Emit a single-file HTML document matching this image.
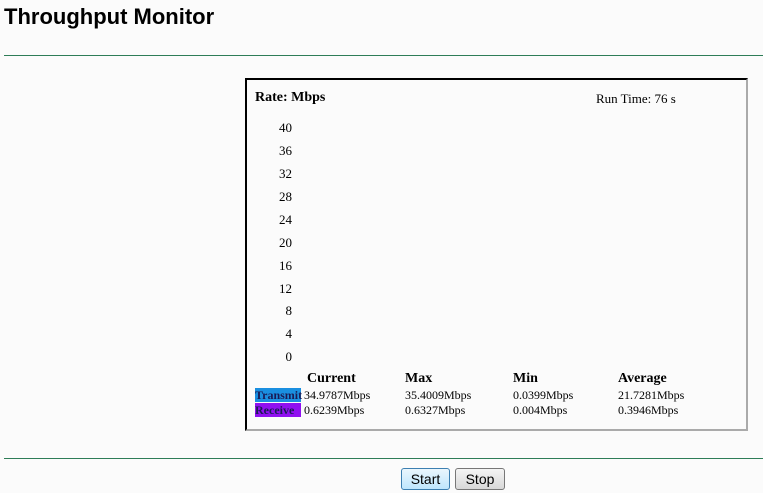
<!DOCTYPE html>
<html><head><style>
body{margin:0;width:763px;height:493px;background:#fbfbfb;position:relative;overflow:hidden;font-family:"Liberation Serif",serif;color:#000}
.a{position:absolute;white-space:nowrap}
h1{position:absolute;left:4px;top:4px;margin:0;font:bold 22px "Liberation Sans",sans-serif}
.hr{position:absolute;left:4px;width:759px;height:1px;background:#2e7d57}
.box{position:absolute;left:245px;top:78px;width:499px;height:349px;border-top:2px solid #000;border-left:2px solid #000;border-right:2px solid #aaa;border-bottom:2px solid #aaa;background:#fbfbfb}
.y{position:absolute;left:270px;width:22px;text-align:right;font-size:13px}
.s{font-size:12px}
.b{font-weight:bold;font-size:14px}
.btn{position:absolute;top:468px;height:22px;font:14px "Liberation Sans",sans-serif;border:1px solid #777;border-radius:3px;background:linear-gradient(#f4f4f4,#d8d8d8);text-align:center;line-height:21px;box-sizing:border-box}
</style></head><body>
<h1>Throughput Monitor</h1>
<div class="hr" style="top:55px"></div>
<div class="box"></div>
<div class="a" style="left:255px;top:90px;font-weight:bold;font-size:14px">Rate: Mbps</div>
<div class="a" style="left:596px;top:91px;font-size:13px">Run Time: 76 s</div>
<div class="y" style="top:120px">40</div>
<div class="y" style="top:143px">36</div>
<div class="y" style="top:166px">32</div>
<div class="y" style="top:189px">28</div>
<div class="y" style="top:212px">24</div>
<div class="y" style="top:235px">20</div>
<div class="y" style="top:258px">16</div>
<div class="y" style="top:281px">12</div>
<div class="y" style="top:303px">8</div>
<div class="y" style="top:326px">4</div>
<div class="y" style="top:349px">0</div>
<div class="a b" style="left:307px;top:371px">Current</div>
<div class="a b" style="left:405px;top:371px">Max</div>
<div class="a b" style="left:513px;top:371px">Min</div>
<div class="a b" style="left:618px;top:371px">Average</div>
<div class="a" style="left:255px;top:388px;width:46px;height:14px;background:#1a8fe0"></div>
<div class="a" style="left:255px;top:403px;width:46px;height:14px;background:#9010f0"></div>
<div class="a s" style="left:255px;top:388px;font-weight:bold;color:#1a1a55">Transmit</div>
<div class="a s" style="left:255px;top:403px;font-weight:bold;color:#1a1a55">Receive</div>
<div class="a s" style="left:304px;top:388px">34.9787Mbps</div>
<div class="a s" style="left:304px;top:403px">0.6239Mbps</div>
<div class="a s" style="left:405px;top:388px">35.4009Mbps</div>
<div class="a s" style="left:405px;top:403px">0.6327Mbps</div>
<div class="a s" style="left:513px;top:388px">0.0399Mbps</div>
<div class="a s" style="left:513px;top:403px">0.004Mbps</div>
<div class="a s" style="left:618px;top:388px">21.7281Mbps</div>
<div class="a s" style="left:618px;top:403px">0.3946Mbps</div>
<div class="hr" style="top:458px"></div>
<div class="btn" style="left:401px;width:49px;border-color:#3c7fb1;background:linear-gradient(#eaf6fd,#bee6fd)">Start</div>
<div class="btn" style="left:455px;width:50px">Stop</div>
</body></html>
